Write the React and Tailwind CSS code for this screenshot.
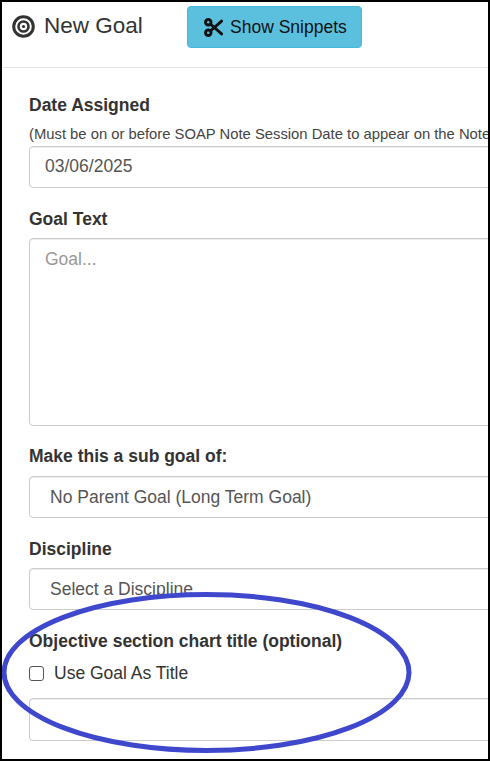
import React from "react";

function Label({ children, className = "" }) {
  return <div className={`font-bold text-[17.5px] leading-[24px] text-[#333] ${className}`}>{children}</div>;
}

function Field({ children, className = "" }) {
  return (
    <div
      className={`w-[520px] h-[42px] shrink-0 flex items-center bg-white border border-[#ccc] rounded-[4px] shadow-[inset_0_1px_1px_rgba(0,0,0,0.075)] text-[17.5px] text-[#555] ${className}`}
    >
      {children}
    </div>
  );
}

export default function App() {
  return (
    <div className="relative w-[490px] h-[761px] overflow-hidden bg-white border-t-2 border-l-2 border-r-2 border-b-2 border-black font-['Liberation_Sans',Arial,sans-serif]">
      {/* header */}
      <div className="h-[66px] border-b border-[#e5e5e5] flex items-start">
        <div className="flex items-center gap-[9px] pl-[10px] pt-[9px]">
          <svg width="23" height="23" viewBox="0 0 23 23" fill="none" stroke="#333">
            <circle cx="11.5" cy="11.5" r="9.8" strokeWidth="3" />
            <circle cx="11.5" cy="11.5" r="5" strokeWidth="2.6" />
            <circle cx="11.5" cy="11.5" r="1.6" fill="#333" strokeWidth="0" />
          </svg>
          <span className="w-[100px] text-[22.5px] leading-[30px] text-[#333] whitespace-nowrap">New Goal</span>
        </div>
        <button className="ml-[43px] mt-[4px] w-[175px] h-[42px] flex items-center gap-[7px] pl-[16px] bg-[#5bc0de] border border-[#46b8da] rounded-[4px] text-[17.5px] text-[#111]">
          <svg width="19" height="19" viewBox="0 0 20 20" fill="none" stroke="#111" strokeWidth="3.1">
            <circle cx="4.5" cy="4.5" r="2.9" />
            <circle cx="4.5" cy="15.5" r="2.9" />
            <path d="M7 6.6L18.5 16.8M7 13.4L18.5 3.2" strokeLinecap="round" />
          </svg>
          Show Snippets
        </button>
      </div>

      {/* form */}
      <div className="pl-[27px] pt-[25px] flex flex-col">
        <Label>Date Assigned</Label>
        <div className="mt-[7px] text-[14.8px] leading-[20px] text-[#444] whitespace-nowrap">
          (Must be on or before SOAP Note Session Date to appear on the Note
        </div>
        <Field className="mt-[2px] pl-[15px] pb-[2px]">03/06/2025</Field>

        <Label className="mt-[19px]">Goal Text</Label>
        <div className="mt-[7px] w-[520px] h-[188px] bg-white border border-[#ccc] rounded-[4px] shadow-[inset_0_1px_1px_rgba(0,0,0,0.075)] pl-[15px] pt-[8px] text-[17.5px] leading-[24px] text-[#999]">
          Goal...
        </div>

        <Label className="mt-[18px]">Make this a sub goal of:</Label>
        <Field className="mt-[8px] pl-[20px]">No Parent Goal (Long Term Goal)</Field>

        <Label className="mt-[19px]">Discipline</Label>
        <Field className="mt-[7px] pl-[20px]">Select a Discipline</Field>

        <Label className="mt-[19px]">Objective section chart title (optional)</Label>
        <div className="mt-[8px] flex items-center gap-[10px] text-[17.5px] leading-[24px] text-[#333]">
          <span className="w-[15px] h-[15px] bg-white border border-[#555] rounded-[3px]" />
          Use Goal As Title
        </div>
        <Field className="mt-[13px] h-[43px]" />
      </div>

      {/* hand drawn circle over the screenshot */}
      <svg className="absolute left-[-2px] top-[-2px] pointer-events-none" width="490" height="761" fill="none">
        <ellipse cx="206.5" cy="672.5" rx="202.5" ry="78" stroke="#3f48cc" strokeWidth="5" />
      </svg>
    </div>
  );
}
